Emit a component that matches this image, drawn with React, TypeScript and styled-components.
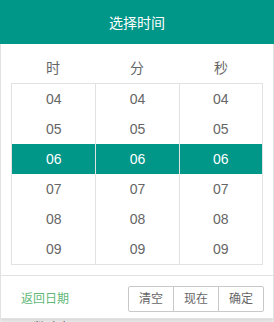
import React from "react"
import styled, { createGlobalStyle } from "styled-components"

const GlobalStyle = createGlobalStyle`
  * { box-sizing: border-box; }
  html, body { margin: 0; padding: 0; background: #f2f2f2; overflow: hidden; }
  body {
    font-family: "Liberation Sans", "Noto Sans CJK SC", sans-serif;
    color: #666;
  }
`

const Page = styled.div`
  width: 274px;
  height: 322px;
  display: flex;
  flex-direction: column;
`

const Panel = styled.div`
  width: 274px;
  background: #fff;
  border: 1px solid #e2e2e2;
  box-shadow: 0 2px 4px rgba(0, 0, 0, 0.12);
  display: flex;
  flex-direction: column;
  flex-shrink: 0;
`

const Header = styled.div`
  height: 44px;
  margin: -1px -1px 0;
  background: #009688;
  color: #fff;
  font-size: 14px;
  display: flex;
  align-items: center;
  justify-content: center;
`

const Content = styled.div`
  padding: 10px 10px 10px;
`

const Labels = styled.div`
  display: grid;
  grid-template-columns: repeat(3, 1fr);
  height: 29px;
  line-height: 29px;
  font-size: 14px;
  text-align: center;
  color: #666;
`

const Grid = styled.div`
  display: grid;
  grid-template-columns: repeat(3, 1fr);
  border: 1px solid #e2e2e2;
`

const Column = styled.ul`
  list-style: none;
  margin: 0;
  padding: 0;
  & + & {
    border-left: 1px solid #e2e2e2;
  }
`

const Cell = styled.li<{ $active?: boolean }>`
  height: 30px;
  line-height: 30px;
  text-align: center;
  font-size: 14px;
  color: ${(p) => (p.$active ? "#fff" : "#666")};
  background: ${(p) => (p.$active ? "#009688" : "transparent")};
`

const Footer = styled.div`
  height: 43px;
  border-top: 1px solid #e2e2e2;
  padding: 10px 9px 0 20px;
  display: flex;
  align-items: flex-start;
  justify-content: space-between;
`

const BackLink = styled.span`
  font-size: 12px;
  line-height: 26px;
  color: #5fb878;
`

const Buttons = styled.div`
  display: flex;
`

const Btn = styled.span`
  height: 26px;
  line-height: 24px;
  padding: 0 10px;
  margin-left: -1px;
  font-size: 12px;
  color: #666;
  border: 1px solid #c9c9c9;
  background: #fff;
  white-space: nowrap;
  &:first-child {
    border-radius: 2px 0 0 2px;
  }
  &:last-child {
    border-radius: 0 2px 2px 0;
  }
`

const Behind = styled.div`
  display: flex;
  justify-content: space-between;
  padding: 1px 12px 0 33px;
  font-size: 14px;
  color: #555;
  line-height: 16px;
`

const values = ["04", "05", "06", "07", "08", "09"]

export default function App() {
  return (
    <>
      <GlobalStyle />
      <Page>
        <Panel>
          <Header>选择时间</Header>
          <Content>
            <Labels>
              <span>时</span>
              <span>分</span>
              <span>秒</span>
            </Labels>
            <Grid>
              {[0, 1, 2].map((c) => (
                <Column key={c}>
                  {values.map((v) => (
                    <Cell key={v} $active={v === "06"}>
                      {v}
                    </Cell>
                  ))}
                </Column>
              ))}
            </Grid>
          </Content>
          <Footer>
            <BackLink>返回日期</BackLink>
            <Buttons>
              <Btn>清空</Btn>
              <Btn>现在</Btn>
              <Btn>确定</Btn>
            </Buttons>
          </Footer>
        </Panel>
        <Behind>
          <span>数字框</span>
          <span>10:14</span>
        </Behind>
      </Page>
    </>
  )
}
